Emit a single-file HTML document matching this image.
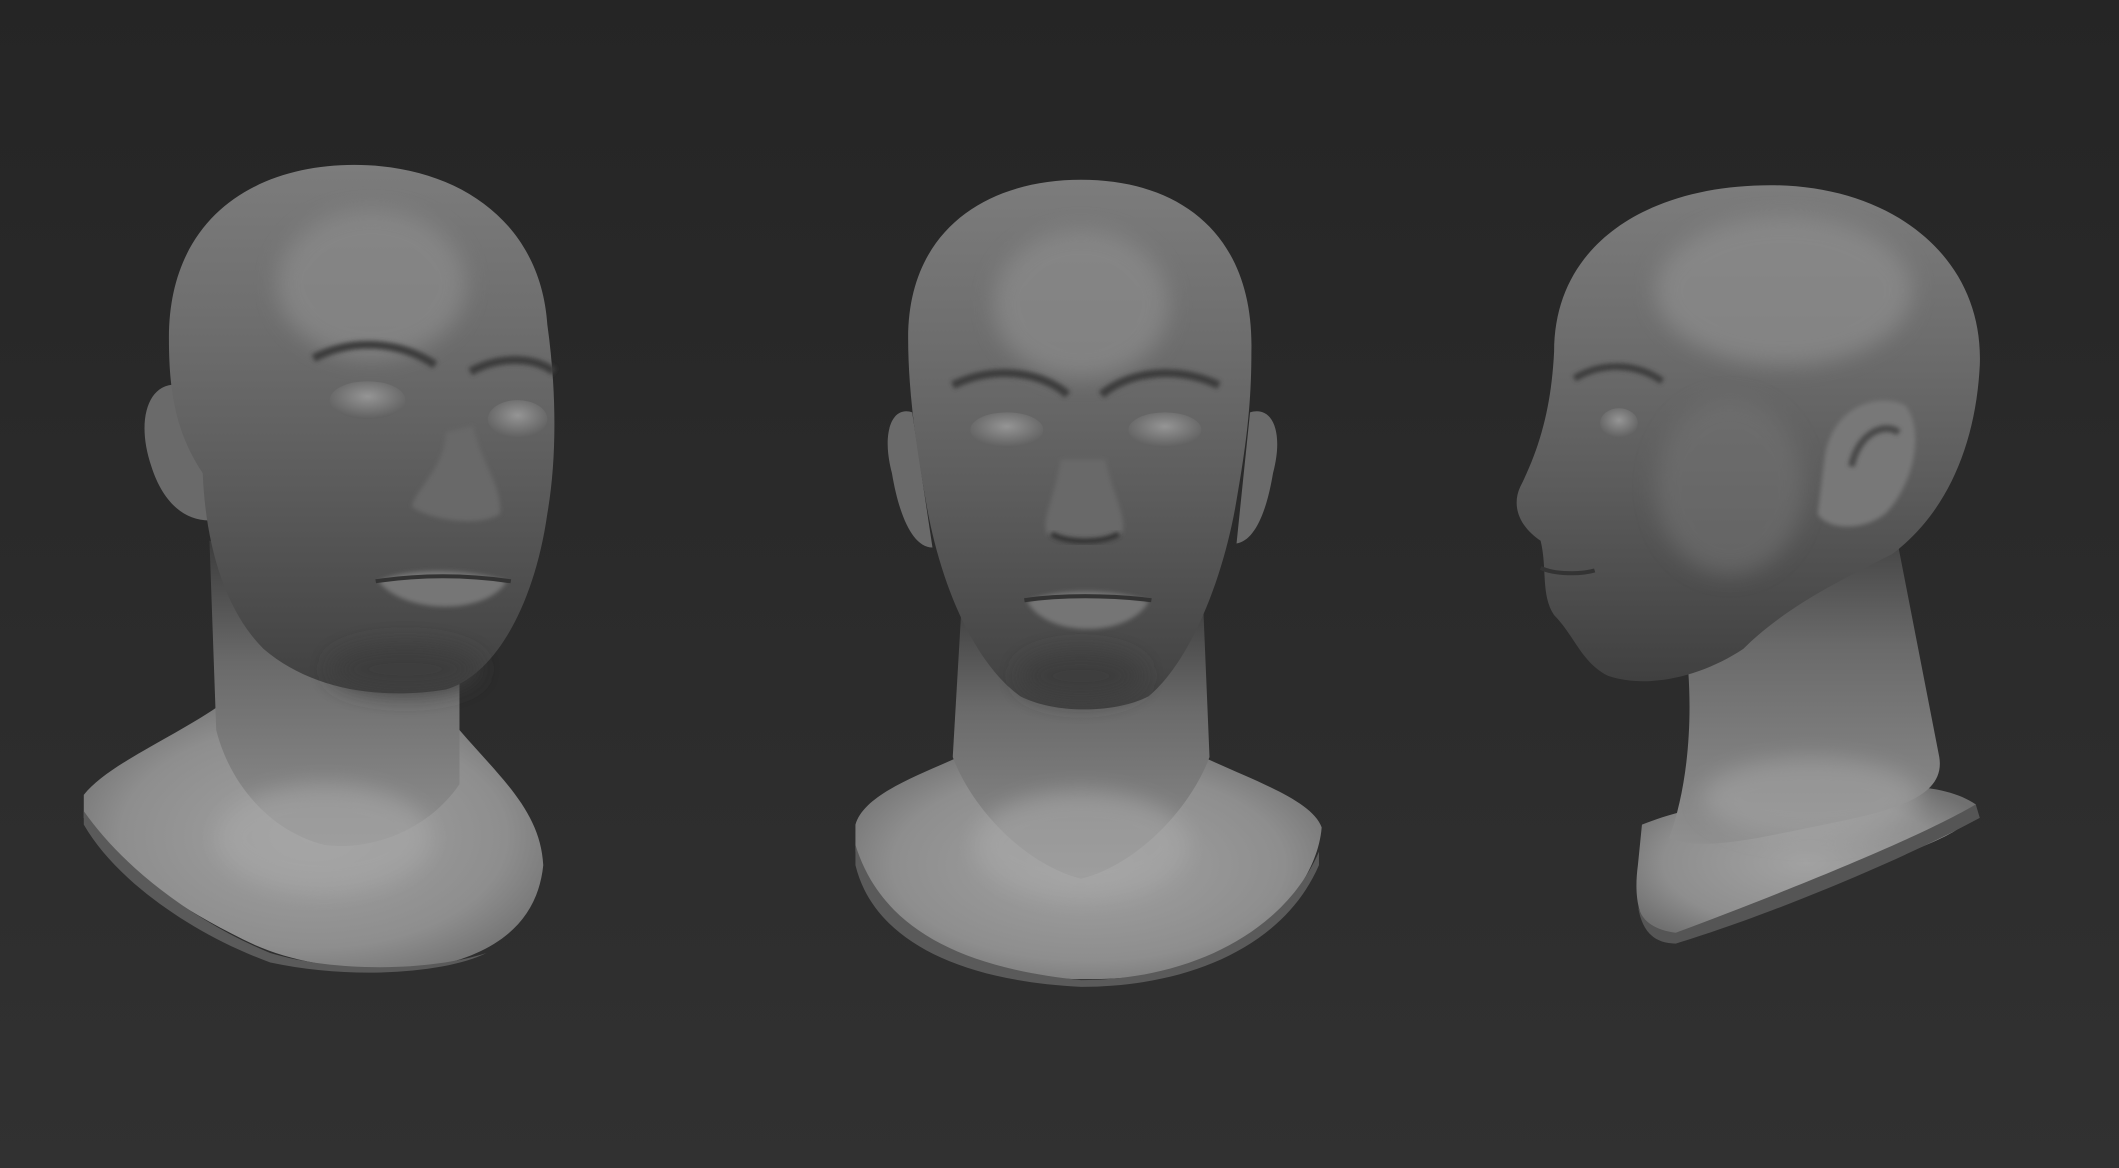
<!DOCTYPE html>
<html><head><meta charset="utf-8"><style>
html,body{margin:0;padding:0;width:2119px;height:1168px;overflow:hidden;background:#2a2a2a}
svg{display:block}
</style></head><body>
<svg width="2119" height="1168" viewBox="0 0 1568 864" preserveAspectRatio="none" xmlns="http://www.w3.org/2000/svg">
<defs>
<linearGradient id="bg" x1="0" y1="0" x2="0" y2="1"><stop offset="0" stop-color="#252525"/><stop offset="1" stop-color="#313131"/></linearGradient>
<linearGradient id="head" x1="0" y1="0" x2="0" y2="1"><stop offset="0" stop-color="#7c7c7c"/><stop offset="0.3" stop-color="#6e6e6e"/><stop offset="0.6" stop-color="#5c5c5c"/><stop offset="1" stop-color="#404040"/></linearGradient>
<linearGradient id="neck" x1="0" y1="0" x2="0" y2="1"><stop offset="0" stop-color="#3c3c3c"/><stop offset="0.4" stop-color="#6a6a6a"/><stop offset="1" stop-color="#8f8f8f"/></linearGradient>
<radialGradient id="chest" cx="0.5" cy="0.5" r="0.6"><stop offset="0" stop-color="#a2a2a2"/><stop offset="0.7" stop-color="#8e8e8e"/><stop offset="1" stop-color="#707070"/></radialGradient>
<radialGradient id="eye" cx="0.5" cy="0.4" r="0.6"><stop offset="0" stop-color="#959595"/><stop offset="1" stop-color="#606060"/></radialGradient>
<filter id="b8" x="-50%" y="-50%" width="200%" height="200%"><feGaussianBlur stdDeviation="8"/></filter>
<filter id="b4" x="-50%" y="-50%" width="200%" height="200%"><feGaussianBlur stdDeviation="4"/></filter>
<filter id="b2" x="-50%" y="-50%" width="200%" height="200%"><feGaussianBlur stdDeviation="1.5"/></filter>
</defs>
<rect width="1568" height="864" fill="url(#bg)"/>

<!-- HEAD 2 center -->
<g>
<path d="M633 610 C640 585 690 570 720 555 L880 555 C920 575 970 590 978 612 C975 650 940 690 900 710 C860 725 800 728 740 720 C690 712 650 680 633 630 Z" fill="url(#chest)"/>
<path d="M633 625 C650 680 700 715 800 725 C880 725 950 690 976 630 L976 640 C950 700 880 730 800 730 C700 725 645 690 633 640Z" fill="#5a5a5a"/>
<path d="M712 440 L890 440 L895 560 C880 600 840 640 800 650 C760 640 720 600 705 560 Z" fill="url(#neck)"/>
<ellipse cx="800" cy="625" rx="80" ry="40" fill="#a8a8a8" filter="url(#b8)" opacity="0.6"/>
<path d="M675 305 C660 300 652 320 660 350 C665 380 675 405 690 405 Z" fill="#6a6a6a"/>
<path d="M925 305 C942 300 950 320 942 350 C937 380 928 400 915 402 Z" fill="#6a6a6a"/>
<path d="M672 250 C672 170 730 133 800 133 C875 133 928 175 926 260 C926 300 922 330 915 370 C905 430 880 490 850 515 C825 528 780 528 755 515 C720 490 695 430 685 370 C678 330 672 290 672 250Z" fill="url(#head)"/>
<ellipse cx="800" cy="225" rx="65" ry="55" fill="#8c8c8c" filter="url(#b8)" opacity="0.7"/>
<ellipse cx="800" cy="500" rx="45" ry="18" fill="#3c3c3c" filter="url(#b8)"/>
<path d="M705 285 C740 268 775 278 790 292 M815 292 C835 275 870 270 902 285" stroke="#3e3e3e" stroke-width="6" fill="none" filter="url(#b2)"/>
<ellipse cx="745" cy="318" rx="27" ry="13" fill="url(#eye)"/>
<ellipse cx="862" cy="318" rx="27" ry="13" fill="url(#eye)"/>
<path d="M785 340 C780 370 770 385 775 395 C790 402 815 402 830 395 C835 385 823 365 818 340Z" fill="#696969" filter="url(#b2)"/>
<path d="M778 395 C790 402 815 402 828 395" stroke="#333" stroke-width="4" fill="none" filter="url(#b2)"/>
<path d="M760 445 C780 435 825 435 850 445 C835 472 775 472 760 445Z" fill="#747474" filter="url(#b2)"/>
<path d="M758 444 C785 440 820 440 852 444" stroke="#333" stroke-width="3" fill="none"/>
</g>

<!-- HEAD 1 left -->
<g>
<path d="M62 588 C80 565 130 545 165 520 L340 540 C370 575 400 600 402 640 C398 680 370 705 320 715 C270 720 220 715 180 695 C130 670 85 640 62 605Z" fill="url(#chest)"/>
<path d="M62 600 C90 640 140 680 200 705 C250 720 320 718 360 705 C330 720 260 725 200 712 C140 690 85 650 62 610Z" fill="#5a5a5a"/>
<path d="M155 400 L340 420 L340 580 C320 610 280 630 240 625 C200 615 170 580 160 540Z" fill="url(#neck)"/>
<ellipse cx="240" cy="620" rx="80" ry="40" fill="#a8a8a8" filter="url(#b8)" opacity="0.6"/>
<path d="M135 285 C110 280 100 310 112 345 C120 370 135 385 155 385 L152 300Z" fill="#6a6a6a"/>
<path d="M125 250 C125 160 190 122 262 122 C340 122 400 165 405 240 C412 290 412 340 405 380 C395 450 365 500 330 510 C280 518 230 510 195 480 C165 450 152 400 150 350 C130 320 125 290 125 250Z" fill="url(#head)"/>
<ellipse cx="275" cy="210" rx="70" ry="55" fill="#8c8c8c" filter="url(#b8)" opacity="0.7"/>
<ellipse cx="300" cy="495" rx="55" ry="18" fill="#3c3c3c" filter="url(#b8)"/>
<path d="M232 265 C265 248 300 255 322 270 M348 275 C370 263 395 264 410 275" stroke="#3e3e3e" stroke-width="6" fill="none" filter="url(#b2)"/>
<ellipse cx="272" cy="296" rx="28" ry="14" fill="url(#eye)"/>
<ellipse cx="383" cy="310" rx="22" ry="14" fill="url(#eye)"/>
<path d="M330 320 C330 345 305 365 305 375 C320 385 355 390 370 380 C372 360 355 340 350 315Z" fill="#696969" filter="url(#b2)"/>
<path d="M280 430 C300 420 345 420 375 430 C360 455 300 455 280 430Z" fill="#767676" filter="url(#b2)"/>
<path d="M278 430 C310 425 345 425 378 430" stroke="#333" stroke-width="3" fill="none"/>
</g>

<!-- HEAD 3 right profile -->
<g>
<path d="M1215 610 C1240 600 1280 590 1340 585 C1400 578 1440 580 1462 595 C1462 610 1440 620 1400 635 C1340 660 1270 685 1235 695 C1215 690 1208 670 1212 640Z" fill="url(#chest)"/>
<path d="M1212 670 C1215 690 1225 698 1240 698 C1300 680 1400 640 1465 605 L1462 595 C1420 620 1320 660 1240 690 C1225 688 1215 682 1212 670Z" fill="#555"/>
<path d="M1245 460 L1400 380 L1435 560 C1440 590 1400 600 1350 610 C1300 620 1260 630 1235 620 C1250 580 1255 520 1245 460Z" fill="url(#neck)"/>
<ellipse cx="1340" cy="590" rx="80" ry="30" fill="#a8a8a8" filter="url(#b8)" opacity="0.5"/>
<path d="M1150 260 C1150 180 1220 137 1310 137 C1400 137 1468 190 1465 270 C1462 330 1440 380 1400 410 C1360 430 1320 450 1290 480 C1260 500 1220 510 1190 500 C1170 490 1165 470 1150 455 C1140 440 1145 420 1140 400 C1125 390 1118 375 1125 360 C1140 330 1148 300 1150 260Z" fill="url(#head)"/>
<ellipse cx="1320" cy="215" rx="95" ry="55" fill="#8e8e8e" filter="url(#b8)" opacity="0.7"/>
<ellipse cx="1280" cy="360" rx="55" ry="65" fill="#727272" filter="url(#b8)" opacity="0.6"/>
<path d="M1350 340 C1355 300 1390 290 1410 300 C1425 320 1415 360 1395 380 C1375 395 1350 390 1345 380Z" fill="#787878" filter="url(#b2)"/>
<path d="M1370 345 C1375 320 1395 312 1405 320" stroke="#4a4a4a" stroke-width="5" fill="none" filter="url(#b2)"/>
<ellipse cx="1198" cy="313" rx="14" ry="11" fill="url(#eye)"/>
<path d="M1165 280 C1185 268 1210 268 1230 282" stroke="#3e3e3e" stroke-width="5" fill="none" filter="url(#b2)"/>
<path d="M1140 420 C1150 425 1170 425 1180 422" stroke="#333" stroke-width="3" fill="none"/>
</g>
</svg>
</body></html>
